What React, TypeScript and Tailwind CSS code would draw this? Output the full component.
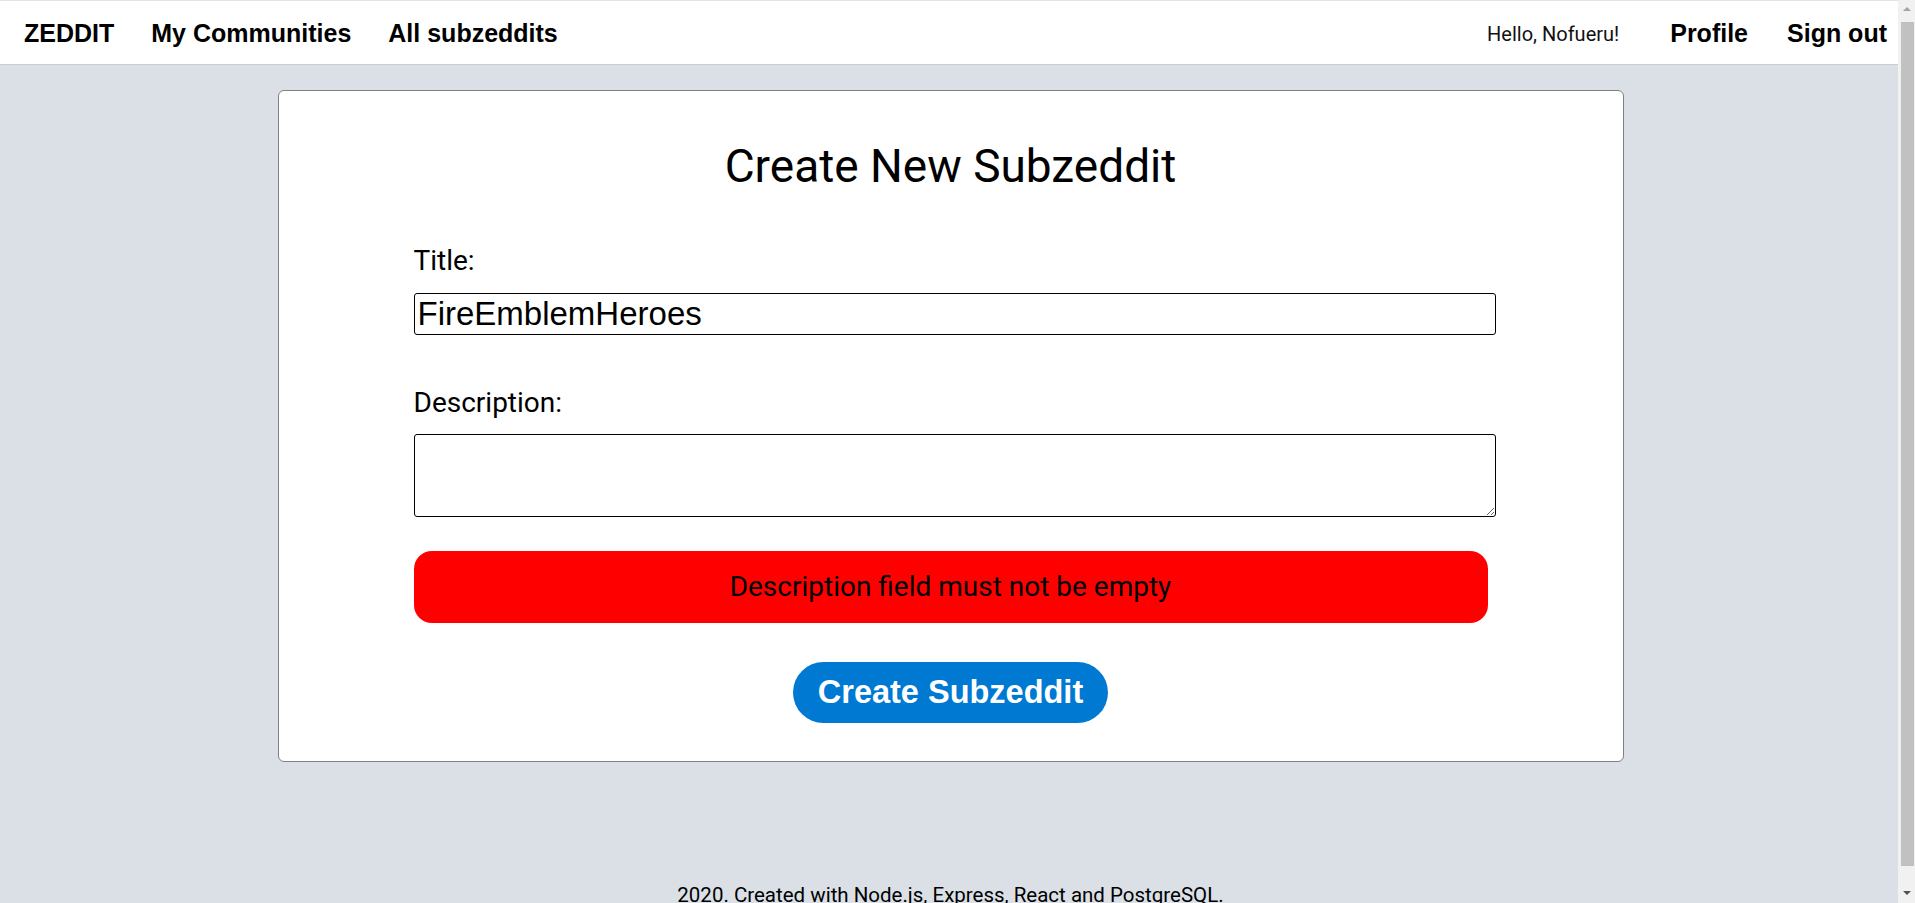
import React from 'react';

const plex = { fontFamily: 'Roboto, "Open Sans", sans-serif' };

function NavBar() {
  return (
    <nav className="h-[65px] shrink-0 flex items-center bg-white border-t border-t-[#e3e3e3] border-b border-b-[#cccccc] pt-[3px] pl-[24px] pr-[11px] font-['Liberation_Sans',Arial,sans-serif]">
      <div className="flex items-center gap-[37px] text-[25px] font-bold text-black">
        <a href="#">ZEDDIT</a>
        <a href="#">My Communities</a>
        <a href="#">All subzeddits</a>
      </div>
      <div className="ml-auto flex items-center">
        <span className="text-[20px] text-[#111] font-['Roboto',sans-serif] mr-[51px]">Hello, Nofueru!</span>
        <a href="#" className="text-[25px] font-bold text-black mr-[39px]">Profile</a>
        <a href="#" className="text-[25px] font-bold text-black">Sign out</a>
      </div>
    </nav>
  );
}

function NewSubzedditForm() {
  return (
    <div className="w-[1346px] shrink-0 bg-white border border-[#808080] rounded-[6px] pt-[48px] pb-[38px]" style={plex}>
      <h1 className="text-center text-[46px] leading-[54px] font-normal text-black">Create New Subzeddit</h1>
      <form className="w-[1074px] mx-auto mt-[51px] flex flex-col">
        <label className="text-[28px] leading-[34px] text-black">Title:</label>
        <input
          defaultValue="FireEmblemHeroes"
          className="mt-[15px] w-[1082px] h-[42px] border border-black rounded-[3px] px-[3px] text-[33px] text-black font-['Liberation_Sans',Arial,sans-serif] outline-none"
        />
        <label className="mt-[51px] text-[28px] leading-[34px] text-black">Description:</label>
        <textarea className="mt-[14px] w-[1082px] h-[83px] border border-black rounded-[3px] outline-none" />
        <div className="mt-[34px] h-[72px] rounded-[18px] bg-[#ff0000] flex items-center justify-center text-[28px] text-black">
          Description field must not be empty
        </div>
        <button
          type="button"
          className="mt-[39px] self-center h-[61px] px-[25px] rounded-full bg-[#0079d3] text-white text-[32.5px] font-bold font-['Liberation_Sans',Arial,sans-serif]"
        >
          Create Subzeddit
        </button>
      </form>
    </div>
  );
}

function ScrollBar() {
  return (
    <div className="w-[17px] shrink-0 bg-[#f1f1f1] flex flex-col items-center">
      <div className="h-[17px] flex items-center justify-center">
        <div className="w-0 h-0 border-l-[4px] border-r-[4px] border-b-[4px] border-l-transparent border-r-transparent border-b-[#a3a3a3]" />
      </div>
      <div className="mt-[5px] w-[13px] ml-[2px] h-[844px] bg-[#c1c1c1]" />
      <div className="mt-auto h-[20px] flex items-center justify-center">
        <div className="w-0 h-0 border-l-[4px] border-r-[4px] border-t-[4px] border-l-transparent border-r-transparent border-t-[#505050]" />
      </div>
    </div>
  );
}

export default function App() {
  return (
    <div className="h-[903px] flex overflow-hidden bg-[#dae0e6]">
      <div className="flex-1 flex flex-col overflow-hidden">
        <NavBar />
        <div className="mt-[25px] flex justify-center pl-[3px]">
          <NewSubzedditForm />
        </div>
        <footer className="mt-[118px] shrink-0 text-center pl-[3px] text-[20.5px] text-black" style={plex}>
          2020. Created with Node.js, Express, React and PostgreSQL.
        </footer>
      </div>
      <ScrollBar />
    </div>
  );
}
